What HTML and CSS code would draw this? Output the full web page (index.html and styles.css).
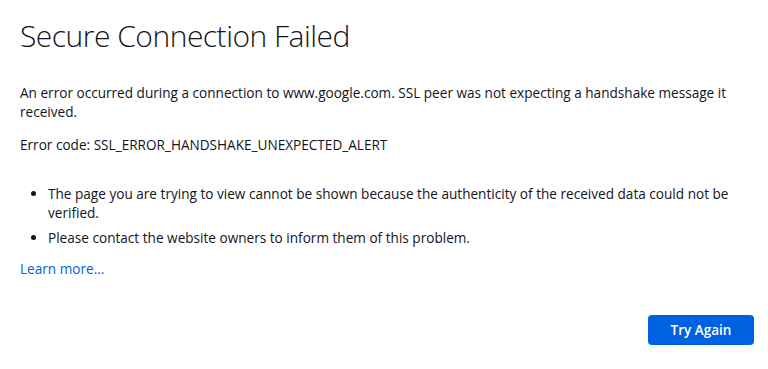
FILE: index.html
```html
<!DOCTYPE html>
<html>
<head>
<meta charset="utf-8">
<link rel="stylesheet" href="styles.css">
</head>
<body>
<div class="page">
  <h1 class="title">Secure Connection Failed</h1>
  <p class="desc">An error occurred during a connection to www.google.com. SSL peer was not expecting a handshake message it received.</p>
  <p class="code">Error code: SSL_ERROR_HANDSHAKE_UNEXPECTED_ALERT</p>
  <ul class="list">
    <li>The page you are trying to view cannot be shown because the authenticity of the received data could not be verified.</li>
    <li>Please contact the website owners to inform them of this problem.</li>
  </ul>
  <a class="learn" href="#">Learn more…</a>
  <div class="actions">
    <button class="retry">Try Again</button>
  </div>
</div>
</body>
</html>
```
FILE: styles.css
```css
html, body {
  margin: 0;
  padding: 0;
  background: #ffffff;
}
body {
  font-family: "Open Sans", "Noto Sans", sans-serif;
  font-size: 13.6px;
  color: #15141a;
}
.page {
  width: 734px;
  padding: 16px 0 0 20px;
}
.title {
  margin: 0;
  font-weight: 300;
  font-size: 30px;
  letter-spacing: -0.5px;
  line-height: 40px;
  color: #15141a;
}
.desc {
  margin: 27px 0 0 0;
  line-height: 19px;
}
.code {
  margin: 14px 0 0 0;
  line-height: 19px;
}
.list {
  margin: 30px 0 0 0;
  padding-left: 28px;
  line-height: 19px;
}
.list li {
  margin-bottom: 6px;
}
.list li:last-child {
  margin-bottom: 0;
}
.learn {
  display: block;
  margin-top: 12px;
  color: #0061e0;
  text-decoration: none;
  line-height: 19px;
}
.actions {
  display: flex;
  justify-content: flex-end;
  margin-top: 37px;
}
.retry {
  width: 106px;
  height: 30px;
  border: none;
  border-radius: 4px;
  background: #0061e0;
  color: #ffffff;
  font-family: "Open Sans", "Noto Sans", sans-serif;
  font-size: 13.5px;
  font-weight: 600;
}
```
